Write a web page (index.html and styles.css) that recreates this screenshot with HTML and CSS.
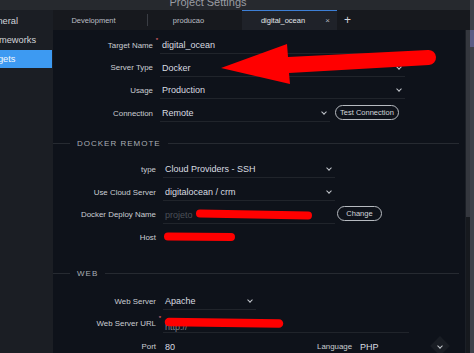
FILE: index.html
```html
<!DOCTYPE html>
<html lang="en">
<head>
    <meta charset="UTF-8">
    <meta name="viewport" content="width=device-width, initial-scale=1.0">
    <title>Project Settings</title>
    <link rel="stylesheet" href="styles.css">
</head>
<body>
<div class="desktop">
    <div class="window">
        <div class="titlebar"><span>Project Settings</span></div>
        <div class="body">
            <!-- left menu, cut by the screenshot -->
            <div class="sidebar">
                <div class="side-item">General</div>
                <div class="side-item">Frameworks</div>
                <div class="side-item active">Targets</div>
            </div>
            <div class="main">
                <div class="tabs">
                    <div class="tab"><span class="tab-label">Development</span><span class="tab-close">×</span></div>
                    <span class="tab-sep"></span>
                    <div class="tab"><span class="tab-label">producao</span><span class="tab-close">×</span></div>
                    <div class="tab active"><span class="tab-label">digital_ocean</span><span class="tab-close">×</span></div>
                    <span class="tab-add">+</span>
                </div>
                <div class="scroll-area">
                    <div class="content">
                        <div class="row">
                            <label class="req">Target Name</label>
                            <div class="field w-wide">digital_ocean</div>
                        </div>
                        <div class="row">
                            <label>Server Type</label>
                            <div class="field select w-wide">Docker<span class="chev"></span></div>
                        </div>
                        <div class="row">
                            <label>Usage</label>
                            <div class="field select w-wide">Production<span class="chev"></span></div>
                        </div>
                        <div class="row">
                            <label>Connection</label>
                            <div class="field-group">
                                <div class="field select w-conn">Remote<span class="chev"></span></div>
                                <button class="pill btn-test">Test Connection</button>
                            </div>
                        </div>

                        <div class="section-title first"><span>Docker Remote</span></div>
                        <div class="row wide-label">
                            <label>type</label>
                            <div class="field select w-mid">Cloud Providers - SSH<span class="chev"></span></div>
                        </div>
                        <div class="row wide-label">
                            <label>Use Cloud Server</label>
                            <div class="field select w-mid">digitalocean / crm<span class="chev"></span></div>
                        </div>
                        <div class="row wide-label">
                            <label>Docker Deploy Name</label>
                            <div class="field-group">
                                <div class="field w-mid placeholder">projeto</div>
                                <button class="pill btn-change">Change</button>
                            </div>
                        </div>
                        <div class="row wide-label">
                            <label>Host</label>
                            <div class="field w-mid no-line"></div>
                        </div>

                        <div class="section-title"><span>Web</span></div>
                        <div class="row wide-label">
                            <label>Web Server</label>
                            <div class="field select w-small">Apache<span class="chev"></span></div>
                        </div>
                        <div class="row wide-label">
                            <label class="req">Web Server URL</label>
                            <div class="field w-url faint"><span class="url-peek">http://</span></div>
                        </div>
                        <div class="row wide-label">
                            <label>Port</label>
                            <div class="field-group">
                                <div class="field w-port no-line">80</div>
                                <label class="inline-label">Language</label>
                                <div class="field select w-lang no-line">PHP<span class="chev boxed"></span></div>
                            </div>
                        </div>
                    </div>
                    <div class="scrollbar"><div class="thumb"></div></div>
                </div>
            </div>
        </div>
    </div>
    <div class="edge"><div class="edge-mark"></div></div>

    <!-- red marks drawn on top of the screenshot -->
    <svg class="marks" width="474" height="353" viewBox="0 0 474 353">
        <path d="M221,68 L287,44 L288,57 L428,50 A7.5,7.5 0 0 1 429,65 L289,73 L290,84 Z" fill="#ff0000"/>
        <line x1="200" y1="213.5" x2="308" y2="215.5" stroke="#ff0000" stroke-width="8" stroke-linecap="round"/>
        <line x1="168" y1="236.5" x2="231" y2="237" stroke="#ff0000" stroke-width="8" stroke-linecap="round"/>
        <line x1="169" y1="322" x2="279" y2="323.5" stroke="#ff0000" stroke-width="8.5" stroke-linecap="round"/>
    </svg>
</div>
</body>
</html>
```

FILE: styles.css
```css
body {
    margin: 0;
    padding: 0;
    font-family: "Liberation Sans", Arial, sans-serif;
    background-color: #0e121a;
    overflow: hidden;
}
.desktop {
    position: relative;
    width: 474px;
    height: 353px;
    display: flex;
    overflow: hidden;
}
.window {
    flex: 1;
    display: flex;
    flex-direction: column;
    min-height: 0;
    background-color: #0e121a;
}
.titlebar {
    flex-shrink: 0;
    height: 10px;
    overflow: hidden;
    display: flex;
    justify-content: center;
    padding-right: 54px;
    background-color: #26292e;
}
.titlebar span {
    font-size: 11px;
    line-height: 11px;
    margin-top: -3px;
    color: #9a9da3;
}
.body {
    flex: 1;
    min-height: 0;
    display: flex;
    overflow: hidden;
}
.sidebar {
    flex-shrink: 0;
    width: 53px;
    padding-top: 1.5px;
    background-color: #1b1e24;
    overflow: hidden;
}
.side-item {
    height: 19px;
    line-height: 19px;
    font-size: 9.3px;
    color: #d2d5da;
    text-indent: -15px;
    white-space: nowrap;
}
.side-item.active {
    height: 18px;
    line-height: 18px;
    width: 52px;
    background-color: #3d9af2;
    color: #f4f7fb;
}
.main {
    flex: 1;
    min-height: 0;
    display: flex;
    flex-direction: column;
}
.tabs {
    flex-shrink: 0;
    height: 20px;
    box-sizing: border-box;
    display: flex;
    align-items: stretch;
    background-color: #17191e;
}
.tab {
    width: 94px;
    display: flex;
    align-items: center;
    padding-right: 6px;
    box-sizing: border-box;
    font-size: 7.5px;
    color: #bcbfc5;
}
.tab-label {
    flex: 1;
    text-align: center;
}
.tab-close {
    width: 7px;
    font-size: 8px;
    text-align: center;
    visibility: hidden;
}
.tab-sep {
    width: 1px;
    align-self: center;
    height: 12px;
    background-color: #3a3d44;
}
.tab.active {
    width: 95px;
    background-color: #1f2229;
    border-top: 1px solid #3d7fd6;
    color: #e3e6ea;
}
.tab.active .tab-close {
    visibility: visible;
    color: #b0b4ba;
}
.tab-add {
    margin-left: 7px;
    align-self: center;
    font-size: 12px;
    color: #d6d9de;
}
.scroll-area {
    flex: 1;
    min-height: 0;
    display: flex;
    overflow: hidden;
}
.content {
    flex: 1;
    padding-top: 3.7px;
    background-color: #0e121a;
    border-right: 1px solid #1b1f26;
}
.row {
    height: 22.7px;
    display: grid;
    grid-template-columns: 100px auto;
    column-gap: 7px;
    align-items: center;
}
.row.wide-label {
    grid-template-columns: 103px auto;
}
.row label, .inline-label {
    text-align: right;
    font-size: 7.9px;
    color: #cbced3;
    white-space: nowrap;
}
label.req {
    position: relative;
}
label.req::after {
    content: "*";
    position: absolute;
    right: -5px;
    top: -4px;
    font-size: 6px;
    color: #ff7b7b;
}
.field {
    height: 17px;
    box-sizing: border-box;
    display: flex;
    align-items: center;
    padding-left: 2px;
    padding-right: 3px;
    font-size: 9px;
    color: #d9dce0;
    border-bottom: 1px solid #20242b;
    margin-top: 1px;
}
.field.no-line {
    border-bottom-color: transparent;
}
.field.placeholder {
    color: #4b5058;
}
.field.faint {
    color: #7d828a;
}
.url-peek {
    margin-top: 6px;
}
.select {
    justify-content: space-between;
}
.chev {
    width: 3px;
    height: 3px;
    border-right: 1.2px solid #c3c7cd;
    border-bottom: 1.2px solid #c3c7cd;
    transform: rotate(45deg);
    margin-right: 1px;
    margin-top: -2px;
}
.chev.boxed {
    box-shadow: 0 0 0 5px #191d24;
    background-color: #191d24;
}
.w-wide { width: 245px; }
.w-conn { width: 170px; }
.w-mid { width: 172px; }
.w-small { width: 93px; }
.w-url { width: 246px; }
.w-port { width: 110px; }
.w-lang { width: 97px; padding-left: 8px; padding-right: 6px; }
.field-group {
    display: flex;
    align-items: center;
}
.inline-label {
    margin-left: 44px;
}
.pill {
    font-family: "Liberation Sans", Arial, sans-serif;
    background: transparent;
    border: 1px solid #b6bac0;
    border-radius: 8px;
    color: #d3d6db;
    padding: 0;
    height: 15px;
    line-height: 13px;
    font-size: 7.5px;
}
.btn-test {
    width: 64px;
    margin-left: 5px;
    margin-top: -2px;
}
.btn-change {
    width: 45px;
    margin-left: 2px;
    margin-top: -2px;
}
.section-title {
    display: flex;
    align-items: center;
    height: 12px;
    margin: 19px 0 10px;
    font-size: 8px;
    letter-spacing: 1px;
    text-transform: uppercase;
    color: #aaaeb4;
}
.section-title.first {
    margin: 13px 0 8.6px;
}
.section-title::before {
    content: "";
    width: 17px;
    height: 1px;
    margin-right: 7px;
    background-color: #262a31;
}
.section-title::after {
    content: "";
    flex: 1;
    height: 1px;
    margin-left: 7px;
    margin-right: 6px;
    background-color: #262a31;
}
.scrollbar {
    flex-shrink: 0;
    width: 4px;
    background-color: #16191e;
}
.thumb {
    height: 187px;
    background-color: #34373e;
}
.edge {
    flex-shrink: 0;
    width: 4px;
    padding-top: 30px;
    background-color: #3e414a;
}
.edge-mark {
    height: 17px;
    background-color: #5b5c86;
}
.marks {
    position: absolute;
    top: 0;
    left: 0;
    pointer-events: none;
}
```
